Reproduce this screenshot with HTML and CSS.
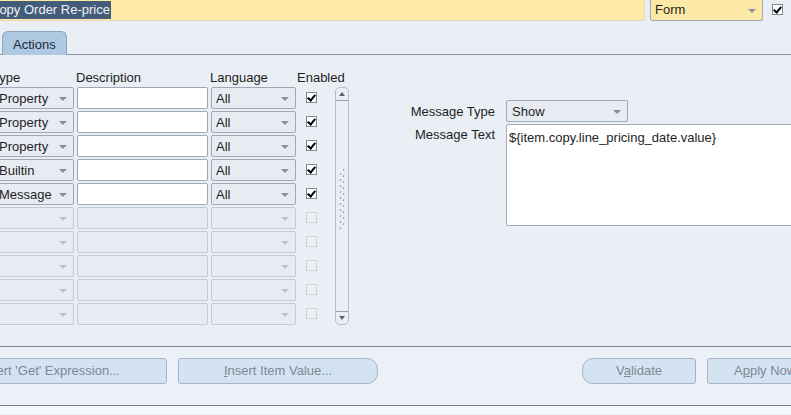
FILE: index.html
```
<!DOCTYPE html>
<html>
<head>
<meta charset="utf-8">
<link rel="stylesheet" href="styles.css">
</head>
<body>
<div class="top">
  <div class="namefield"><span class="sel">Copy Order Re-price</span></div>
  <div class="formsel"><span>Form</span><i class="arr"></i></div>
  <div class="cb on top-cb"></div>
</div>

<div class="tabstrip"><div class="tab">Actions</div></div>

<div class="main">
  <div class="grid">
    <div class="hd hd-type">Type</div>
    <div class="hd">Description</div>
    <div class="hd">Language</div>
    <div class="hd hd-en">Enabled</div>
    <div class="hd-blank"></div>
    <div class="scroll">
      <div class="sb-up"><i></i></div>
      <div class="sb-track">
        <svg class="grip" width="8" height="62" viewBox="0 0 8 62">
          <g stroke="#8e98a6" stroke-width="1">
            <path d="M6 0l-1 2M3 4l-1 2M6 6l-1 2M3 10l-1 2M6 12l-1 2M3 16l-1 2M6 18l-1 2M3 22l-1 2M6 24l-1 2M3 28l-1 2M6 30l-1 2M3 34l-1 2M6 36l-1 2M3 40l-1 2M6 42l-1 2M3 46l-1 2M6 48l-1 2M3 52l-1 2M6 54l-1 2M3 58l-1 2"/>
          </g>
        </svg>
      </div>
      <div class="sb-down"><i></i></div>
    </div>

    <div class="fld sel-f type"><span>Property</span><i class="arr"></i></div>
    <div class="fld txt"></div>
    <div class="fld sel-f"><span>All</span><i class="arr"></i></div>
    <div class="cbcell"><div class="cb on"></div></div>

    <div class="fld sel-f type"><span>Property</span><i class="arr"></i></div>
    <div class="fld txt"></div>
    <div class="fld sel-f"><span>All</span><i class="arr"></i></div>
    <div class="cbcell"><div class="cb on"></div></div>

    <div class="fld sel-f type"><span>Property</span><i class="arr"></i></div>
    <div class="fld txt"></div>
    <div class="fld sel-f"><span>All</span><i class="arr"></i></div>
    <div class="cbcell"><div class="cb on"></div></div>

    <div class="fld sel-f type"><span>Builtin</span><i class="arr"></i></div>
    <div class="fld txt"></div>
    <div class="fld sel-f"><span>All</span><i class="arr"></i></div>
    <div class="cbcell"><div class="cb on"></div></div>

    <div class="fld sel-f type"><span>Message</span><i class="arr"></i></div>
    <div class="fld txt"></div>
    <div class="fld sel-f"><span>All</span><i class="arr"></i></div>
    <div class="cbcell"><div class="cb on"></div></div>

    <div class="fld sel-f type dis"><i class="arr"></i></div>
    <div class="fld dis"></div>
    <div class="fld sel-f dis"><i class="arr"></i></div>
    <div class="cbcell"><div class="cb dis"></div></div>

    <div class="fld sel-f type dis"><i class="arr"></i></div>
    <div class="fld dis"></div>
    <div class="fld sel-f dis"><i class="arr"></i></div>
    <div class="cbcell"><div class="cb dis"></div></div>

    <div class="fld sel-f type dis"><i class="arr"></i></div>
    <div class="fld dis"></div>
    <div class="fld sel-f dis"><i class="arr"></i></div>
    <div class="cbcell"><div class="cb dis"></div></div>

    <div class="fld sel-f type dis"><i class="arr"></i></div>
    <div class="fld dis"></div>
    <div class="fld sel-f dis"><i class="arr"></i></div>
    <div class="cbcell"><div class="cb dis"></div></div>

    <div class="fld sel-f type dis"><i class="arr"></i></div>
    <div class="fld dis"></div>
    <div class="fld sel-f dis"><i class="arr"></i></div>
    <div class="cbcell"><div class="cb dis"></div></div>
  </div>

  <div class="msg">
    <div class="lbl">Message Type</div>
    <div class="fld sel-f msgtype"><span>Show</span><i class="arr"></i></div>
    <div class="lbl lbl-top">Message Text</div>
    <div class="fld txt msgtext">${item.copy.line_pricing_date.value}</div>
  </div>
</div>

<div class="buttons">
  <div class="btn b-get">Insert 'Get' Expression...</div>
  <div class="btn b-item"><u>I</u>nsert Item Value...</div>
  <div class="spacer"></div>
  <div class="btn b-val">V<u>a</u>lidate</div>
  <div class="btn b-apply">A<u>p</u>ply Now</div>
</div>
<div class="foot"></div>
</body>
</html>
```

FILE: styles.css
```
* { box-sizing: border-box; }
html, body { margin: 0; padding: 0; }
body {
  width: 791px;
  height: 415px;
  overflow: hidden;
  background: #eaeef5;
  font-family: "Liberation Sans", Arial, sans-serif;
  font-size: 13px;
  color: #1e1e1e;
}

/* top bar */
.top {
  display: flex;
  align-items: flex-start;
  height: 21px;
}
.namefield {
  width: 657px;
  height: 21px;
  margin-left: -12px;
  padding: 1px 0 0 2px;
  background: #fdeaa7;
  border-bottom: 1px solid #e3d9b4;
  border-right: 1px solid #e3d9b4;
}
.sel {
  display: inline-block;
  background: #435c7a;
  color: #eef2f7;
  line-height: 18px;
  padding-right: 1px;
}
.formsel {
  position: relative;
  width: 113px;
  height: 21px;
  margin-left: 5px;
  background: #fde9a6;
  border: 1px solid #a2a8ae;
  border-top: none;
  border-radius: 0 0 3px 3px;
  padding: 2px 0 0 4px;
}
.top-cb { margin: 4px 0 0 9px; }

/* arrows */
.arr {
  position: absolute;
  right: 6px;
  top: 9px;
  width: 0; height: 0;
  border-left: 4px solid transparent;
  border-right: 4px solid transparent;
  border-top: 4px solid #86909c;
}
.dis .arr { border-top-color: #b9c1cb; }

/* checkbox */
.cb {
  width: 11px;
  height: 11px;
  border: 1px solid #7e8896;
  background: #fff;
  position: relative;
}
.cb.on::after {
  content: "";
  position: absolute;
  left: 2px; top: 0px;
  width: 3px; height: 6px;
  border: solid #000;
  border-width: 0 2px 2px 0;
  transform: rotate(40deg);
}
.cb.dis { border-color: #cbd2da; background: #edf0f5; }

/* tabs */
.tabstrip {
  margin-top: 10px;
  height: 24px;
  border-bottom: 1px solid #8793a9;
  padding-left: 2px;
}
.tab {
  width: 65px;
  height: 24px;
  background: #afc9e2;
  border: 1px solid #8ea3bb;
  border-bottom: none;
  border-radius: 6px 6px 0 0;
  padding: 5px 0 0 10px;
  color: #16283a;
}

/* main */
.main {
  display: flex;
  align-items: flex-start;
  height: 292px;
  border-bottom: 1px solid #7b889e;
}
.grid {
  display: grid;
  flex: none;
  margin-left: -11px;
  grid-template-columns: 85px 131px 85px 33px 14px;
  grid-template-rows: 30px repeat(10, 22px);
  column-gap: 3px;
  row-gap: 2px;
}
.hd {
  align-self: end;
  line-height: 14px;
  margin-left: -1px;
}
.hd-type { margin-left: 3px; }
.hd-en { margin-left: -2px; white-space: nowrap; }

.fld {
  position: relative;
  height: 22px;
  border: 1px solid #9ea8b6;
  border-radius: 2px;
  padding: 3px 0 0 4px;
  line-height: 15px;
  white-space: nowrap;
}
.sel-f { background: #e8ecf2; }
.txt { background: #fff; }
.type { padding-left: 9px; }
.fld.dis { background: #e7ecf3; border-color: #c3cad4; }

.cbcell { padding: 5px 0 0 7px; }

.scroll {
  grid-column: 5;
  grid-row: 2 / span 10;
  display: flex;
  flex-direction: column;
  border: 1px solid #b4bdca;
  border-radius: 5px;
  background: #eaeef5;
}
.sb-up, .sb-down {
  height: 13px;
  position: relative;
}
.sb-up { border-bottom: 1px solid #98a3b2; }
.sb-down { border-top: 1px solid #98a3b2; }
.sb-up i, .sb-down i {
  position: absolute;
  left: 3px;
  width: 0; height: 0;
  border-left: 3px solid transparent;
  border-right: 3px solid transparent;
}
.sb-up i { top: 4px; border-bottom: 4px solid #5a6270; }
.sb-down i { top: 4px; border-top: 4px solid #5a6270; }
.sb-track {
  flex: 1;
  display: flex;
  align-items: center;
  justify-content: center;
}
.grip { margin-top: -12px; }

/* message panel */
.msg {
  display: grid;
  flex: none;
  grid-template-columns: 95px 300px;
  grid-template-rows: 22px 102px;
  column-gap: 11px;
  row-gap: 2px;
  margin: 45px 0 0 51px;
}
.lbl {
  text-align: right;
  align-self: center;
  white-space: nowrap;
}
.lbl-top { align-self: start; padding-top: 3px; }
.msgtype { width: 122px; padding-left: 5px; }
.msgtext {
  height: 102px;
  padding: 5px 0 0 2px;
  border-color: #a3acb8;
}

/* buttons */
.buttons {
  display: flex;
  height: 59px;
  padding-top: 11px;
  background: #ecf0f7;
  border-bottom: 1px solid #6f7d94;
}
.btn {
  height: 26px;
  border: 1px solid #a7b4c5;
  background: #d4e3f2;
  color: #7d8795;
  line-height: 24px;
  text-align: center;
  white-space: nowrap;
  border-radius: 3px;
  flex: none;
}
.btn u { text-decoration-color: #7d8795; }
.b-get {
  width: 199px;
  margin-left: -32px;
  text-align: right;
  padding-right: 46px;
}
.b-item {
  width: 200px;
  margin-left: 11px;
  border-radius: 3px 11px 11px 3px;
}
.spacer { flex: 1; }
.b-val {
  width: 114px;
  border-radius: 11px 3px 3px 11px;
}
.b-apply {
  width: 110px;
  margin-left: 11px;
  margin-right: -26px;
  text-align: left;
  padding-left: 26px;
}
.foot { height: 8px; background: #f7f8fb; }
```
